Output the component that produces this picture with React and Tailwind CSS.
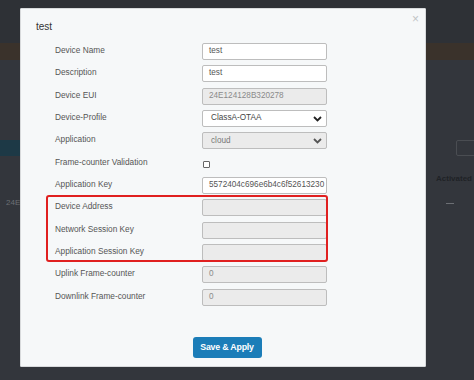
import React from "react";

const font = { fontFamily: '"Liberation Sans", Arial, sans-serif' };

function Field({ label, children }) {
  return (
    <div className="flex h-[22.35px] items-start">
      <div className="w-[147px] pt-[1px] text-[8.3px] leading-[12px] text-[#555]">{label}</div>
      <div className="w-[125px]">{children}</div>
    </div>
  );
}

function TextBox({ value = "", disabled = false }) {
  return (
    <div
      className={
        "h-[17px] w-[125px] overflow-hidden whitespace-nowrap rounded-[2px] border-[1.5px] border-[#bdbdbd] pl-[6px] text-[8.2px] leading-[14px] " +
        (disabled ? "bg-[#ebebeb] text-[#8a8a8a]" : "bg-white text-[#555]")
      }
    >
      {value}
    </div>
  );
}

function SelectBox({ value, disabled = false }) {
  return (
    <div
      className={
        "flex h-[17px] w-[125px] items-center justify-between rounded-[2px] border-[1.5px] border-[#bdbdbd] pl-[8px] pr-[4px] text-[8.2px] " +
        (disabled ? "bg-[#ebebeb] text-[#777]" : "bg-white text-[#444]")
      }
    >
      <span>{value}</span>
      <svg width="9" height="6" viewBox="0 0 9 6">
        <path d="M1 1l3.5 3.5L8 1" fill="none" stroke={disabled ? "#555" : "#222"} strokeWidth="1.8" />
      </svg>
    </div>
  );
}

export default function App() {
  return (
    <div className="relative h-[380px] w-[474px] overflow-hidden bg-[#33363c]" style={font}>
      {/* page behind the overlay */}
      <div className="h-[43px] bg-[#2e3136]" />
      <div className="h-[17px] bg-[#3a322b]" />
      <div className="h-[80px]" />
      <div className="flex h-[16px] items-center justify-between">
        <div className="h-[16px] w-[22px] bg-[#1d3946]" />
        <div className="mr-[-4px] h-[16px] w-[22px] rounded-[2px] border border-[#4a4d52]" />
      </div>
      <div className="flex h-[36px] justify-end pr-[2px] pt-[17px] text-[8px] font-bold text-[#1f2226]">Activated</div>
      <div className="flex items-center justify-between px-[6px] pt-[5px] text-[8px] text-[#6c6f74]">
        <span>24E</span>
        <span className="mr-[14px] h-px w-[8px] bg-[#6c6f74]" />
      </div>

      {/* modal */}
      <div className="absolute left-[20px] top-[8px] h-[359px] w-[406px] rounded-[1px] border border-[#d8dadc] bg-[#f6f8f9]">
        <div className="absolute right-[6px] top-[3px] text-[12px] leading-[14px] text-[#c2c4c6]">×</div>
        <div className="pl-[15px] pt-[12px] text-[10px] leading-[12px] text-[#333]">test</div>
        <div className="pl-[34px] pt-[10px]">
          <Field label="Device Name"><TextBox value="test" /></Field>
          <Field label="Description"><TextBox value="test" /></Field>
          <Field label="Device EUI"><TextBox value="24E124128B320278" disabled /></Field>
          <Field label="Device-Profile"><SelectBox value="ClassA-OTAA" /></Field>
          <Field label="Application"><SelectBox value="cloud" disabled /></Field>
          <Field label="Frame-counter Validation">
            <div className="ml-px mt-[6px] h-[7px] w-[7px] rounded-[1px] border border-[#666] bg-white" />
          </Field>
          <Field label="Application Key"><TextBox value="5572404c696e6b4c6f52613230" /></Field>
          <div className="relative">
            <div className="pointer-events-none absolute left-[-9px] top-[-4px] h-[67px] w-[282px] rounded-[3px] border-2 border-[#e02020]" />
            <Field label="Device Address"><TextBox disabled /></Field>
            <Field label="Network Session Key"><TextBox disabled /></Field>
            <Field label="Application Session Key"><TextBox disabled /></Field>
          </div>
          <Field label="Uplink Frame-counter"><TextBox value="0" disabled /></Field>
          <Field label="Downlink Frame-counter"><TextBox value="0" disabled /></Field>
        </div>
        <div className="flex justify-center pl-[8px] pt-[26px]">
          <button className="h-[21px] w-[69px] rounded-[3px] bg-[#1b7db8] text-[8.8px] font-bold tracking-[-0.2px] text-white">
            Save &amp; Apply
          </button>
        </div>
      </div>
    </div>
  );
}
